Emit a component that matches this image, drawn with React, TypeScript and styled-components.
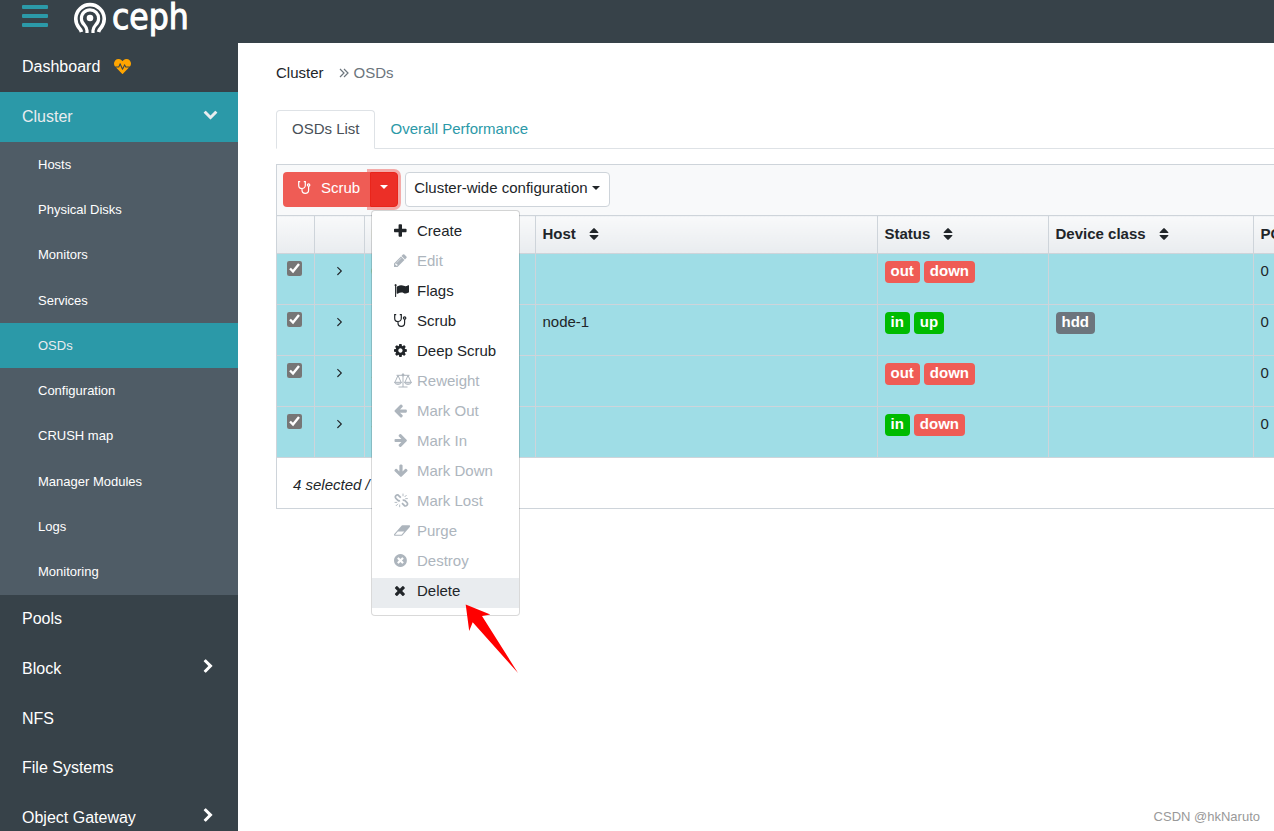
import React from 'react';
import styled, { createGlobalStyle, css } from 'styled-components';
import { FaHeartbeat } from 'react-icons/fa';

const Global = createGlobalStyle`
  *, *::before, *::after { box-sizing: border-box; }
  body {
    margin: 0;
    background: #fff;
    color: #212529;
    font-family: "Liberation Sans", Arial, sans-serif;
    font-size: 15px;
    line-height: 22px;
  }
  button, input { font: inherit; }
  a { color: inherit; text-decoration: none; }
`;

/* ---------- icons ---------- */

const PATHS = {
  plus: 'M1408 736v192q0 40-28 68t-68 28H896v416q0 40-28 68t-68 28H608q-40 0-68-28t-28-68v-416H96q-40 0-68-28T0 928V736q0-40 28-68t68-28h416V224q0-40 28-68t68-28h192q40 0 68 28t28 68v416h416q40 0 68 28t28 68z',
  pencil: 'M363 1536l91-91-235-235-91 91v107h128v128h107zM886 608q0-22-22-22-10 0-17 7L305 1135q-7 7-7 17 0 22 22 22 10 0 17-7l542-542q7-7 7-17zM832 416l416 416L416 1664H0v-416zM1515 512q0 53-37 90l-166 166-416-416 166-165q36-38 90-38 53 0 91 38l235 234q37 39 37 91z',
  flag: 'M320 256q0 72-64 110v1266q0 13-9.500 22.500T224 1664h-64q-13 0-22.500-9.500T128 1632V366q-64-38-64-110 0-53 37.500-90.500T192 128t90.500 37.500T320 256zM1792 320v763q0 25-12.500 38.500T1740 1149q-215 116-369 116-61 0-123.500-22t-108.500-48-115.500-48-142.500-22q-192 0-464 146-17 9-33 9-26 0-45-19t-19-45V474q0-32 31-55 21-14 79-43 236-120 421-120 107 0 200 29t219 88q38 19 88 19 54 0 117.500-21t110-47 88-47T1728 256q26 0 45 19t19 45z',
  times: 'M1298 1322q0 40-28 68l-136 136q-28 28-68 28t-68-28l-294-294-294 294q-28 28-68 28t-68-28L138 1390q-28-28-28-68t28-68l294-294-294-294q-28-28-28-68t28-68l136-136q28-28 68-28t68 28l294 294 294-294q28-28 68-28t68 28l136 136q28 28 28 68t-28 68L976 960l294 294q28 28 28 68z',
  cog: 'M1024 896q0-106-75-181t-181-75-181 75-75 181 75 181 181 75 181-75 75-181zm512-109v222q0 12-8 23t-20 13l-185 28q-19 54-39 91 35 50 107 138 10 12 10 25t-9 23q-27 37-99 108t-94 71q-12 0-26-9l-138-108q-44 23-91 38-16 136-29 186-7 28-36 28h-222q-14 0-24.500-8.500t-11.500-21.500l-28-184q-49-16-90-37l-141 107q-10 9-25 9-14 0-25-11-126-114-165-168-7-10-7-23 0-12 8-23 15-21 51-66.500t54-70.500q-27-50-41-99l-183-27q-13-2-21-12.500t-8-23.500v-222q0-12 8-23t19-13l186-28q14-46 39-92-40-57-107-138-10-12-10-24 0-10 9-23 26-36 98.500-107.500t94.500-71.500q13 0 26 10l138 107q44-23 91-38 16-136 29-186 7-28 36-28h222q14 0 24.500 8.500t11.500 21.500l28 184q49 16 90 37l142-107q9-9 24-9 13 0 25 10 129 119 165 170 7 8 7 22 0 12-8 23-15 21-51 66.500t-54 70.500q26 50 41 98l183 28q13 2 21 12.500t8 23.500z',
  arrow: 'M1536 896v128q0 53-32.500 90.500t-84.500 37.500H715l293 294q38 36 38 90t-38 90l-75 76q-37 37-90 37-52 0-91-37L101 1050q-37-37-37-90 0-52 37-91l651-650q38-38 91-38 52 0 90 38l75 74q38 38 38 91t-38 91L715 768h704q52 0 84.500 37.500t32.500 90.500z',
  timesCircle: 'M1149 1122q0-26-19-45L949 896l181-181q19-19 19-45 0-27-19-46l-90-90q-19-19-46-19-26 0-45 19L768 715 587 534q-19-19-45-19-27 0-46 19l-90 90q-19 19-19 46 0 26 19 45l181 181-181 181q-19 19-19 45 0 27 19 46l90 90q19 19 46 19 26 0 45-19l181-181 181 181q19 19 45 19 27 0 46-19l90-90q19-19 19-46zM1536 896q0 209-103 385.500T1153.500 1561 768 1664t-385.500-103T103 1281.500 0 896t103-385.500T382.500 231 768 128t385.500 103T1433 510.500 1536 896z',
  eraser: 'M896 1408l336-384H464l-336 384h768zM1909 331q15 34 9.500 71.500T1888 468l-896 1024q-38 44-96 44H128q-38 0-69.500-20.500T11 1461q-15-34-9.500-71.500T32 1324L928 300q38-44 96-44h768q38 0 69.500 20.500T1909 331z',
  chevron: 'M1107 877L365 1619q-19 19-45 19t-45-19l-166-166q-19-19-19-45t19-45l531-531L109 301q-19-19-19-45t19-45L275 45q19-19 45-19t45 19l742 742q19 19 19 45t-19 45z',
  chevronDown: 'M1683 728L941 1469q-19 19-45 19t-45-19L109 728q-19-19-19-45.500t19-45.500l166-165q19-19 45-19t45 19l531 531 531-531q19-19 45-19t45 19l166 165q19 19 19 45.500t-19 45.500z',
  angle: 'M595 960q0 13-10 23l-466 466q-10 10-23 10t-23-10l-50-50q-10-10-10-23t10-23l393-393L23 567q-10-10-10-23t10-23l50-50q10-10 23-10t23 10l466 466q10 10 10 23z',
};

type GlyphName = keyof typeof PATHS;

function Glyph({ name, size = 15, rotate = 0 }: { name: GlyphName; size?: number; rotate?: number }) {
  return (
    <svg width={size} height={size} viewBox="0 0 1792 1792" overflow="visible" fill="currentColor" aria-hidden="true">
      <path d={PATHS[name]} transform={rotate ? `rotate(${rotate} 800 928)` : undefined} />
    </svg>
  );
}

function Stethoscope() {
  return (
    <svg width="15" height="15" viewBox="0 0 15 15" fill="none" stroke="currentColor" strokeWidth="1.200" aria-hidden="true">
      <path d="M2.200 1.600H.7V5.200a3.300 3.300 0 0 0 6.600 0V1.600H5.800M4 8.500V10a3.300 3.300 0 0 0 6.600 0V6.300" />
      <circle cx="10.600" cy="5" r="1.200" />
    </svg>
  );
}

function Scale() {
  return (
    <svg width="18" height="15" viewBox="0 0 18 15" fill="none" stroke="currentColor" strokeWidth="1" aria-hidden="true">
      <path d="M2.500 2.300H15.500M9 .5V14M4.500 14H13.500M4 2.500L.9 9.300M4 2.500L7.100 9.300M14 2.500L10.900 9.300M14 2.500L17.100 9.300" />
      <path d="M.5 9.300H7.500C7 12 1 12 .5 9.300zM10.500 9.300H17.500C17 12 11 12 10.500 9.300z" fill="currentColor" fillOpacity=".4" />
      <circle cx="9" cy="2" r="1" fill="currentColor" />
    </svg>
  );
}

function BrokenLink() {
  return (
    <svg width="15" height="15" viewBox="0 0 15 15" fill="none" stroke="currentColor" strokeWidth="1.700" aria-hidden="true">
      <path d="M6.800 4.700L4.700 2.600A1.700 1.700 0 0 0 2.200 2.400L1.800 2.800A1.700 1.700 0 0 0 1.900 5.300L4.200 7.500A1.700 1.700 0 0 0 6 7.600" />
      <path d="M8 10.200L10.200 12.400A1.700 1.700 0 0 0 12.700 12.500L13 12.200A1.700 1.700 0 0 0 13 9.700L10.800 7.500A1.700 1.700 0 0 0 8.700 7.500" />
      <path d="M9 .6V3.200M10.600 4L12.600 2M11.300 5.600H13.800M.6 9.400H3.200M4 10.800L1.800 13M5.700 11.600V14.200" strokeWidth=".9" />
    </svg>
  );
}

function DoubleAngle() {
  return (
    <svg width="10" height="10" viewBox="0 0 10 10" fill="none" stroke="currentColor" strokeWidth="1.200" aria-hidden="true">
      <path d="M1 1L5 5L1 9M5 1L9 5L5 9" />
    </svg>
  );
}

function SortIcon() {
  return (
    <svg width="10" height="12" viewBox="0 0 10 12" fill="currentColor" aria-hidden="true">
      <path d="M.9 5Q.3 5 .7 4.300L4.500.3Q5 0 5.500.3L9.300 4.300Q9.700 5 9.100 5zM.9 7Q.3 7 .7 7.700L4.500 11.700Q5 12 5.500 11.700L9.300 7.700Q9.700 7 9.100 7z" />
    </svg>
  );
}

function CephMark() {
  return (
    <svg width="32" height="32" viewBox="0 0 32 32" fill="none" stroke="#fff" strokeWidth="3.600" aria-hidden="true">
      <path d="M7.500 30Q7 28 5 25.800A14.200 14.200 0 1 1 27 25.800Q25 28 24.500 30" />
      <path d="M13 31V28.500Q13 26 10.200 22.800A8.600 8.600 0 1 1 21.800 22.800Q19 26 19 28.500V31" strokeWidth="3.200" />
      <circle cx="16" cy="16" r="3.300" fill="#fff" stroke="none" />
    </svg>
  );
}

/* ---------- shell ---------- */

const Page = styled.div`
  position: relative;
  display: flex;
  flex-direction: column;
  height: 100vh;
  overflow: hidden;
`;

const TopBar = styled.header`
  display: flex;
  align-items: flex-start;
  flex: none;
  height: 43px;
  padding: 2px 22px;
  gap: 26px;
  background: #374249;
`;

const MenuToggle = styled.button`
  display: flex;
  flex-direction: column;
  gap: 5px;
  width: 26px;
  padding: 3px 0 0;
  border: 0;
  background: none;
`;

const Bar = styled.span`
  height: 4px;
  width: 100%;
  border-radius: 1px;
  background: #2b99a8;
`;

const Brand = styled.a`
  display: flex;
  gap: 6px;
  color: #fff;
  font-family: "DejaVu Sans Condensed", "DejaVu Sans", sans-serif;
  font-stretch: condensed;
  font-size: 35px;
  line-height: 30px;
  -webkit-text-stroke: 1px #fff;
`;

const Body = styled.div`
  display: flex;
  flex: 1;
  min-height: 0;
`;

const Sidebar = styled.nav`
  flex: none;
  width: 238px;
  overflow: hidden;
  background: #374249;
  color: #fff;
  font-size: 16px;
`;

const NavItem = styled.a<{ $open?: boolean; $short?: boolean }>`
  display: flex;
  align-items: center;
  justify-content: space-between;
  height: ${p => (p.$short ? 49 : 50)}px;
  padding: ${p => (p.$open ? '0 20px 0 22px' : '0 20px 2px 22px')};
  background: ${p => (p.$open ? '#2b99a8' : 'transparent')};
  color: ${p => (p.$open ? '#e9ecef' : '#fff')};
`;

const NavLabel = styled.span`
  display: flex;
  align-items: center;
  gap: 14px;
  svg { color: #ffa500; }
`;

const NavArrow = styled.span`
  display: flex;
  width: 15px;
  padding-bottom: 5px;
`;

const SubMenu = styled.div`
  display: grid;
  grid-auto-rows: 1fr;
  min-height: 453px;
  background: #4f5c66;
  font-size: 13px;
`;

const SubItem = styled.a<{ $active?: boolean }>`
  display: flex;
  align-items: center;
  padding-left: 38px;
  background: ${p => (p.$active ? '#2b99a8' : 'transparent')};
  color: ${p => (p.$active ? '#e9ecef' : '#fff')};
`;

const Main = styled.main`
  flex: 1;
  min-width: 0;
  overflow: hidden;
  padding: 19px 0 0 38px;
`;

/* ---------- content ---------- */

const Breadcrumb = styled.nav`
  display: flex;
  align-items: center;
  color: #6c757d;
  a { color: #212529; margin-right: 15px; }
  svg { margin-right: 5px; }
`;

const Tabs = styled.div`
  display: flex;
  margin-top: 26px;
  border-bottom: 1px solid #dee2e6;
`;

const Tab = styled.button<{ $active?: boolean }>`
  height: 39px;
  margin-bottom: -1px;
  padding: 0 15px 2px;
  border: 1px solid transparent;
  border-radius: 4px 4px 0 0;
  background: none;
  color: #2b99a8;
  ${p => p.$active && css`
    padding: 0 14px 2px 15px;
    border-color: #dee2e6 #dee2e6 #fff;
    background: #fff;
    color: #495057;
  `}
`;

const Panel = styled.section`
  margin-top: 15px;
  border: 1px solid #ced4da;
  border-right: 0;
`;

const Toolbar = styled.div`
  display: flex;
  gap: 7px;
  padding: 7px 6px 8px;
  background: #f8f9fa;
`;

const Split = styled.div`
  position: relative;
  display: flex;
`;

const ScrubButton = styled.button`
  display: flex;
  align-items: center;
  gap: 8px;
  height: 35px;
  padding: 0 10px 4px 15px;
  border: 0;
  border-radius: 4px 0 0 4px;
  background: #ef5c55;
  color: #fff;
`;

const ToggleButton = styled.button`
  display: flex;
  align-items: center;
  justify-content: center;
  width: 28px;
  height: 35px;
  padding: 0 0 6px;
  border: 1px solid #e9251b;
  border-radius: 0 4px 4px 0;
  background: #ec2f27;
  color: #fff;
  box-shadow: 0 0 0 3px rgba(239, 92, 85, 0.500);
`;

const Caret = styled.span`
  border: 4px solid transparent;
  border-top-color: currentColor;
  border-bottom: 0;
`;

const ConfigButton = styled.button`
  display: flex;
  align-items: center;
  gap: 4px;
  height: 35px;
  padding: 0 9px 4px 8px;
  border: 1px solid #ced4da;
  border-radius: 4px;
  background: #fff;
  color: #212529;
`;

const Menu = styled.div`
  position: absolute;
  z-index: 5;
  top: 38px;
  left: 88px;
  width: 149px;
  padding: 7px 0;
  border: 1px solid rgba(0, 0, 0, 0.150);
  border-radius: 4px;
  background: #fff;
  background-clip: padding-box;
`;

const MenuItem = styled.button<{ $hover?: boolean }>`
  display: flex;
  align-items: center;
  width: 100%;
  height: 30px;
  padding: 0 0 4px 22px;
  border: 0;
  background: ${p => (p.$hover ? '#e9ecef' : 'none')};
  color: #212529;
  &:disabled { color: #adb5bd; }
`;

const IconSlot = styled.span`
  display: flex;
  align-items: center;
  flex: none;
  width: 23px;
  padding-bottom: 1px;
`;

const Table = styled.table`
  width: 1079px;
  table-layout: fixed;
  border-collapse: collapse;
`;

const Th = styled.th`
  height: 38px;
  padding: 0 7px 2px;
  border-top: 1px solid #ced4da;
  border-right: 1px solid #ced4da;
  background: linear-gradient(#f8f9fa, #e9ecef);
  text-align: left;
  font-weight: 700;
  svg { margin-left: 13px; vertical-align: -1px; }
`;

const Td = styled.td<{ $center?: boolean }>`
  height: 51px;
  padding: 6px 7px 0;
  border: 1px solid #ced4da;
  border-left: 0;
  background: #9fdde6;
  vertical-align: top;
  text-align: ${p => (p.$center ? 'center' : 'left')};
`;

const Check = styled.input`
  width: 15px;
  height: 15px;
  margin: 1px 0 0 3px;
  accent-color: #767676;
`;

const Expand = styled.button`
  padding: 2px 0 0 10px;
  border: 0;
  background: none;
  color: #212529;
`;

const Badge = styled.span<{ $tone: string }>`
  display: inline-block;
  margin: 1px 4px 0 0;
  padding: 0 6px 2px;
  border-radius: 4px;
  background: ${p => p.$tone};
  color: #fff;
  font-weight: 700;
  line-height: 20px;
`;

const Footer = styled.div`
  padding: 16px;
  height: 50px;
  font-style: italic;
`;

const Pointer = styled.svg`
  position: absolute;
  z-index: 6;
  left: 465px;
  top: 604px;
`;

const Watermark = styled.div`
  position: absolute;
  right: 14px;
  bottom: 3px;
  color: #999;
  font-size: 13px;
`;

/* ---------- data ---------- */

const SUB_ITEMS = ['Hosts', 'Physical Disks', 'Monitors', 'Services', 'OSDs', 'Configuration', 'CRUSH map', 'Manager Modules', 'Logs', 'Monitoring'];

const LOWER_ITEMS = [
  { label: 'Pools' },
  { label: 'Block', nested: true },
  { label: 'NFS', short: true },
  { label: 'File Systems' },
  { label: 'Object Gateway', nested: true },
];

const ACTIONS: { label: string; icon: React.ReactNode; enabled?: boolean }[] = [
  { label: 'Create', icon: <Glyph name="plus" size={16} />, enabled: true },
  { label: 'Edit', icon: <Glyph name="pencil" /> },
  { label: 'Flags', icon: <Glyph name="flag" />, enabled: true },
  { label: 'Scrub', icon: <Stethoscope />, enabled: true },
  { label: 'Deep Scrub', icon: <Glyph name="cog" />, enabled: true },
  { label: 'Reweight', icon: <Scale /> },
  { label: 'Mark Out', icon: <Glyph name="arrow" /> },
  { label: 'Mark In', icon: <Glyph name="arrow" rotate={180} /> },
  { label: 'Mark Down', icon: <Glyph name="arrow" rotate={270} /> },
  { label: 'Mark Lost', icon: <BrokenLink /> },
  { label: 'Purge', icon: <Glyph name="eraser" /> },
  { label: 'Destroy', icon: <Glyph name="timesCircle" /> },
  { label: 'Delete', icon: <Glyph name="times" />, enabled: true },
];

const TONES: Record<string, string> = { out: '#ef5c55', down: '#ef5c55', in: '#00bb00', up: '#00bb00' };

const ROWS = [
  { id: 0, host: '', status: ['out', 'down'], device: '' },
  { id: 1, host: 'node-1', status: ['in', 'up'], device: 'hdd' },
  { id: 2, host: '', status: ['out', 'down'], device: '' },
  { id: 3, host: '', status: ['in', 'down'], device: '' },
];

export default function App() {
  return (
    <Page>
      <Global />
      <TopBar>
        <MenuToggle aria-label="Toggle navigation"><Bar /><Bar /><Bar /></MenuToggle>
        <Brand href="#"><CephMark />ceph</Brand>
      </TopBar>
      <Body>
        <Sidebar>
          <NavItem href="#" $short><NavLabel>Dashboard <FaHeartbeat size={17} /></NavLabel></NavItem>
          <NavItem href="#" $open>Cluster <NavArrow><Glyph name="chevronDown" size={15} /></NavArrow></NavItem>
          <SubMenu>
            {SUB_ITEMS.map(item => (
              <SubItem key={item} href="#" $active={item === 'OSDs'}>{item}</SubItem>
            ))}
          </SubMenu>
          {LOWER_ITEMS.map(item => (
            <NavItem key={item.label} href="#" $short={item.short}>
              {item.label}
              {item.nested && <NavArrow><Glyph name="chevron" size={15} /></NavArrow>}
            </NavItem>
          ))}
        </Sidebar>
        <Main>
          <Breadcrumb aria-label="Breadcrumb">
            <a href="#">Cluster</a><DoubleAngle /><span>OSDs</span>
          </Breadcrumb>
          <Tabs role="tablist">
            <Tab role="tab" aria-selected="true" $active>OSDs List</Tab>
            <Tab role="tab" aria-selected="false">Overall Performance</Tab>
          </Tabs>
          <Panel>
            <Toolbar>
              <Split>
                <ScrubButton><Stethoscope />Scrub</ScrubButton>
                <ToggleButton aria-label="More actions" aria-expanded="true"><Caret /></ToggleButton>
                <Menu role="menu">
                  {ACTIONS.map(a => (
                    <MenuItem key={a.label} role="menuitem" disabled={!a.enabled} $hover={a.label === 'Delete'}>
                      <IconSlot>{a.icon}</IconSlot>{a.label}
                    </MenuItem>
                  ))}
                </Menu>
              </Split>
              <ConfigButton>Cluster-wide configuration<Caret /></ConfigButton>
            </Toolbar>
            <Table>
              <colgroup>
                <col width="37" /><col width="50" /><col width="171" /><col width="342" />
                <col width="171" /><col width="205" /><col width="103" />
              </colgroup>
              <thead>
                <tr>
                  <Th /><Th /><Th>ID<SortIcon /></Th><Th>Host<SortIcon /></Th>
                  <Th>Status<SortIcon /></Th><Th>Device class<SortIcon /></Th><Th>PGs<SortIcon /></Th>
                </tr>
              </thead>
              <tbody>
                {ROWS.map(row => (
                  <tr key={row.id}>
                    <Td><Check type="checkbox" defaultChecked aria-label={`Select OSD ${row.id}`} /></Td>
                    <Td $center><Expand aria-label={`Expand OSD ${row.id}`}><Glyph name="angle" /></Expand></Td>
                    <Td>{row.id}</Td>
                    <Td>{row.host}</Td>
                    <Td>{row.status.map(s => <Badge key={s} $tone={TONES[s]}>{s}</Badge>)}</Td>
                    <Td>{row.device && <Badge $tone="#6c757d">{row.device}</Badge>}</Td>
                    <Td>0</Td>
                  </tr>
                ))}
              </tbody>
            </Table>
            <Footer>4 selected / 4 total</Footer>
          </Panel>
        </Main>
      </Body>
      <Pointer width="54" height="70" viewBox="0 0 54 70" fill="#f00" aria-hidden="true">
        <path d="M.7.500L25.300 10.500L17 12L53 69L7.700 18.300L4.200 27z" />
      </Pointer>
      <Watermark>CSDN @hkNaruto</Watermark>
    </Page>
  );
}
